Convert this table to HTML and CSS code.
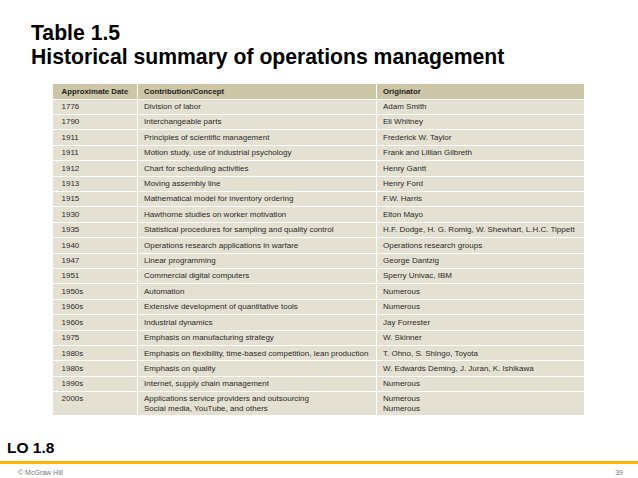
FILE: index.html
```html
<!DOCTYPE html>
<html>
<head>
<meta charset="utf-8">
<link rel="stylesheet" href="styles.css">
</head>
<body>
<div class="slide">
  <h1 class="title">Table 1.5<br>Historical summary of operations management</h1>
  <table class="summary">
    <colgroup><col class="c1"><col class="c2"><col class="c3"></colgroup>
    <thead>
      <tr><th>Approximate Date</th><th>Contribution/Concept</th><th>Originator</th></tr>
    </thead>
    <tbody>
      <tr><td>1776</td><td>Division of labor</td><td>Adam Smith</td></tr>
      <tr><td>1790</td><td>Interchangeable parts</td><td>Eli Whitney</td></tr>
      <tr><td>1911</td><td>Principles of scientific management</td><td>Frederick W. Taylor</td></tr>
      <tr><td>1911</td><td>Motion study, use of industrial psychology</td><td>Frank and Lillian Gilbreth</td></tr>
      <tr><td>1912</td><td>Chart for scheduling activities</td><td>Henry Gantt</td></tr>
      <tr><td>1913</td><td>Moving assembly line</td><td>Henry Ford</td></tr>
      <tr><td>1915</td><td>Mathematical model for inventory ordering</td><td>F.W. Harris</td></tr>
      <tr><td>1930</td><td>Hawthorne studies on worker motivation</td><td>Elton Mayo</td></tr>
      <tr><td>1935</td><td>Statistical procedures for sampling and quality control</td><td>H.F. Dodge, H. G. Romig, W. Shewhart, L.H.C. Tippett</td></tr>
      <tr><td>1940</td><td>Operations research applications in warfare</td><td>Operations research groups</td></tr>
      <tr><td>1947</td><td>Linear programming</td><td>George Dantzig</td></tr>
      <tr><td>1951</td><td>Commercial digital computers</td><td>Sperry Univac, IBM</td></tr>
      <tr><td>1950s</td><td>Automation</td><td>Numerous</td></tr>
      <tr><td>1960s</td><td>Extensive development of quantitative tools</td><td>Numerous</td></tr>
      <tr><td>1960s</td><td>Industrial dynamics</td><td>Jay Forrester</td></tr>
      <tr><td>1975</td><td>Emphasis on manufacturing strategy</td><td>W. Skinner</td></tr>
      <tr><td>1980s</td><td>Emphasis on flexibility, time-based competition, lean production</td><td>T. Ohno, S. Shingo, Toyota</td></tr>
      <tr><td>1980s</td><td>Emphasis on quality</td><td>W. Edwards Deming, J. Juran, K. Ishikawa</td></tr>
      <tr><td>1990s</td><td>Internet, supply chain management</td><td>Numerous</td></tr>
      <tr><td>2000s</td><td>Applications service providers and outsourcing<br>Social media, YouTube, and others</td><td>Numerous<br>Numerous</td></tr>
    </tbody>
  </table>
  <div class="lo">LO 1.8</div>
  <div class="rule"></div>
  <div class="footer"><span>© McGraw Hill</span><span>39</span></div>
</div>
</body>
</html>
```

FILE: styles.css
```css
html, body {
  margin: 0;
  padding: 0;
  background: #ffffff;
}
body {
  font-family: "Liberation Sans", Arial, sans-serif;
  color: #000;
}
.slide {
  width: 638px;
  height: 478px;
  display: flex;
  flex-direction: column;
  overflow: hidden;
}
.title {
  margin: 0;
  padding: 21px 0 0 31px;
  font-size: 21.2px;
  line-height: 24.3px;
  font-weight: bold;
  color: #000;
}
.summary {
  margin: 14px 0 0 53px;
  width: 531px;
  border-collapse: separate;
  border-spacing: 0;
  table-layout: fixed;
  font-size: 8px;
  color: #2a2a2a;
}
.c1 { width: 85px; }
.c2 { width: 239px; }
.c3 { width: 207px; }
.summary th,
.summary td {
  text-align: left;
  vertical-align: top;
  line-height: 9.4px;
  padding: 2.5px 5px 2.5px 6px;
  border-bottom: 1px solid #ffffff;
  border-right: 1.5px solid #ffffff;
  white-space: nowrap;
}
.summary th:first-child,
.summary td:first-child {
  padding-left: 8.5px;
}
.summary th:last-child,
.summary td:last-child {
  border-right: none;
}
.summary th {
  background: #cdc6a6;
  font-weight: bold;
  font-size: 7.8px;
  color: #1e1e1e;
  padding-top: 3px;
  padding-bottom: 2.5px;
  border-bottom-width: 1.5px;
}
.summary td {
  background: #e4e1d2;
}
.summary tbody tr:last-child td {
  border-bottom: none;
  padding-top: 2px;
  padding-bottom: 1.5px;
}
.lo {
  margin: auto 0 0 0;
  padding-left: 7px;
  font-size: 15.5px;
  line-height: 18px;
  font-weight: bold;
  color: #000;
  margin-bottom: 4.5px;
}
.rule {
  height: 3px;
  background: #ffb300;
  flex: none;
}
.footer {
  height: 14px;
  display: flex;
  justify-content: space-between;
  align-items: center;
  padding: 2px 15px 0 18px;
  box-sizing: border-box;
  font-size: 7px;
  color: #777;
}
```
